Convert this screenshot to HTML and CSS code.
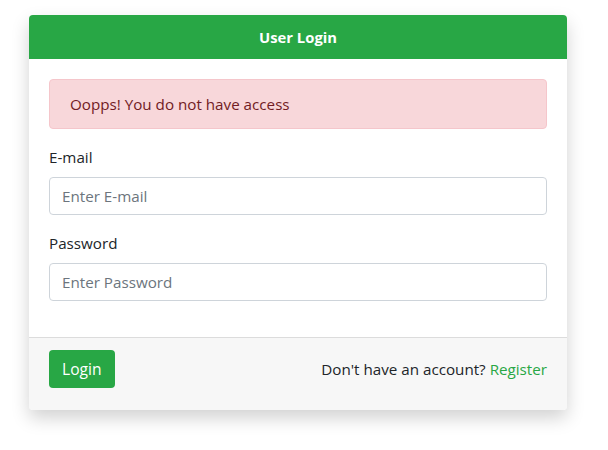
FILE: index.html
```html
<!DOCTYPE html>
<html lang="en">
<head>
    <meta charset="UTF-8">
    <meta name="viewport" content="width=device-width, initial-scale=1.0">
    <title>User Login</title>
    <link rel="stylesheet" href="styles.css">
</head>
<body>
    <div class="card">
        <div class="card-header">User Login</div>
        <div class="card-body">
            <div class="alert">Oopps! You do not have access</div>
            <div class="form-group">
                <label for="email">E-mail</label>
                <input type="text" id="email" placeholder="Enter E-mail">
            </div>
            <div class="form-group">
                <label for="password">Password</label>
                <input type="password" id="password" placeholder="Enter Password">
            </div>
        </div>
        <div class="card-footer">
            <button class="btn">Login</button>
            <span class="signup">Don't have an account? <a href="#">Register</a></span>
        </div>
    </div>
</body>
</html>
```

FILE: styles.css
```css
html, body {
    height: 100%;
}

body {
    font-family: "Open Sans", "Noto Sans", sans-serif;
    font-size: 15.2px;
    color: #212529;
    background-color: #fff;
    margin: 0;
    padding: 15px 0 0 29px;
    box-sizing: border-box;
}

.card {
    width: 538px;
    background: #fff;
    border-radius: 4px;
    box-shadow: 0 8px 18px rgba(0, 0, 0, 0.18);
    overflow: hidden;
}

.card-header {
    background-color: #28a745;
    color: #fff;
    font-weight: bold;
    font-size: 14.8px;
    text-align: center;
    padding: 12px 20px 12px;
    line-height: 20px;
}

.card-body {
    padding: 20px;
}

.alert {
    background-color: #f8d7da;
    border: 1px solid #f5c6cb;
    color: #721c24;
    border-radius: 4px;
    padding: 12px 20px;
    line-height: 24px;
    margin-bottom: 16px;
}

.form-group {
    margin-bottom: 16px;
}

label {
    display: block;
    line-height: 24px;
    margin-bottom: 8px;
}

input {
    display: block;
    box-sizing: border-box;
    width: 100%;
    height: 38px;
    padding: 6px 12px;
    font-family: inherit;
    font-size: 15.2px;
    color: #495057;
    border: 1px solid #ced4da;
    border-radius: 4px;
}

input::placeholder {
    color: #6c757d;
}

.card-footer {
    background-color: #f7f7f7;
    border-top: 1px solid #dcdcdc;
    padding: 12px 20px 22px;
    display: flex;
    justify-content: space-between;
    align-items: center;
}

.btn {
    font-family: inherit;
    font-size: 15.6px;
    line-height: 26px;
    padding: 6px 13px;
    border: none;
    border-radius: 4px;
    background-color: #28a745;
    color: #fff;
    cursor: pointer;
}

.signup a {
    color: #28a745;
    text-decoration: none;
}
```
